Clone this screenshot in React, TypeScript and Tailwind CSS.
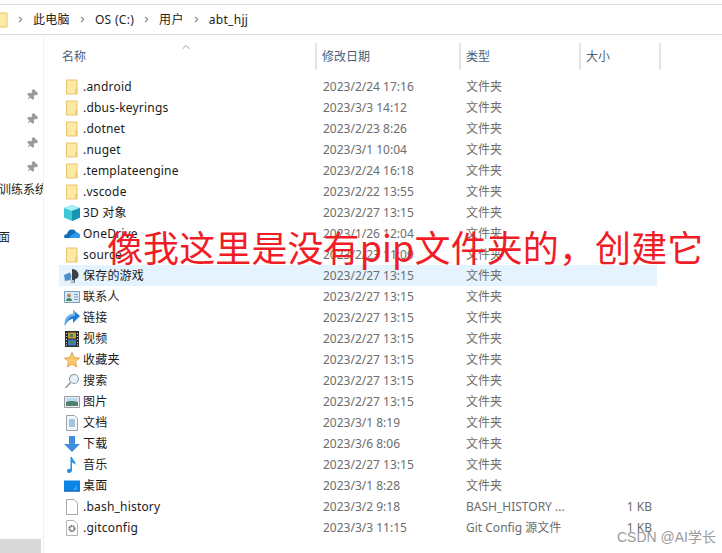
import { Pin, ChevronRight, ChevronUp } from "lucide-react";

const FONT = "font-['Noto_Sans','Noto_Sans_CJK_SC',sans-serif]";

type IconKind =
  | "folder" | "cube" | "cloud" | "games" | "contacts" | "link" | "video" | "star"
  | "search" | "picture" | "doc" | "download" | "music" | "desktop" | "file" | "config";

const ROWS: { name: string; date: string; type: string; size?: string; icon: IconKind }[] = [
  { name: ".android", date: "2023/2/24 17:16", type: "文件夹", icon: "folder" },
  { name: ".dbus-keyrings", date: "2023/3/3 14:12", type: "文件夹", icon: "folder" },
  { name: ".dotnet", date: "2023/2/23 8:26", type: "文件夹", icon: "folder" },
  { name: ".nuget", date: "2023/3/1 10:04", type: "文件夹", icon: "folder" },
  { name: ".templateengine", date: "2023/2/24 16:18", type: "文件夹", icon: "folder" },
  { name: ".vscode", date: "2023/2/22 13:55", type: "文件夹", icon: "folder" },
  { name: "3D 对象", date: "2023/2/27 13:15", type: "文件夹", icon: "cube" },
  { name: "OneDrive", date: "2023/1/26 12:04", type: "文件夹", icon: "cloud" },
  { name: "source", date: "2023/2/23 11:09", type: "文件夹", icon: "folder" },
  { name: "保存的游戏", date: "2023/2/27 13:15", type: "文件夹", icon: "games" },
  { name: "联系人", date: "2023/2/27 13:15", type: "文件夹", icon: "contacts" },
  { name: "链接", date: "2023/2/27 13:15", type: "文件夹", icon: "link" },
  { name: "视频", date: "2023/2/27 13:15", type: "文件夹", icon: "video" },
  { name: "收藏夹", date: "2023/2/27 13:15", type: "文件夹", icon: "star" },
  { name: "搜索", date: "2023/2/27 13:15", type: "文件夹", icon: "search" },
  { name: "图片", date: "2023/2/27 13:15", type: "文件夹", icon: "picture" },
  { name: "文档", date: "2023/3/1 8:19", type: "文件夹", icon: "doc" },
  { name: "下载", date: "2023/3/6 8:06", type: "文件夹", icon: "download" },
  { name: "音乐", date: "2023/2/27 13:15", type: "文件夹", icon: "music" },
  { name: "桌面", date: "2023/3/1 8:28", type: "文件夹", icon: "desktop" },
  { name: ".bash_history", date: "2023/3/2 9:18", type: "BASH_HISTORY ...", size: "1 KB", icon: "file" },
  { name: ".gitconfig", date: "2023/3/3 11:15", type: "Git Config 源文件", size: "1 KB", icon: "config" },
];

function FileIcon({ kind }: { kind: IconKind }) {
  const svg = "h-4 w-4 shrink-0";
  switch (kind) {
    case "folder":
      return (
        <svg viewBox="0 0 16 16" className={svg}>
          <path d="M2.500 1h10.500v14H2.500z" fill="#ffe9a6" stroke="#e8c568" />
          <path d="M11 9.500h2.500V15H11z" fill="#f3cf72" />
        </svg>
      );
    case "cube":
      return (
        <svg viewBox="0 0 16 16" className={svg}>
          <path d="M0 3l8-3 8 3v9.500L8 16l-8-3.500z" fill="#3fc6d8" />
          <path d="M0 3l8 3 8-3-8-3z" fill="#a9ecf2" />
          <path d="M8 6v10l8-3.500V3z" fill="#1793b4" />
        </svg>
      );
    case "cloud":
      return (
        <svg viewBox="0 0 16 16" className={svg}>
          <path d="M0 11c0-2 1.500-3 3-3 .5-3 3-5 5.500-4.500C10.500 3.500 12 5 12 6.500c2.500 0 4 2 4 3.500s-1 2-2 2H2c-1 0-2-.5-2-1z" fill="#0f6cbd" />
          <path d="M6 12c0-2 1.500-3.500 3-4l3-1.500c2.500 0 4 2 4 3.500s-1 2-2 2z" fill="#2b9be8" />
        </svg>
      );
    case "games":
      return (
        <svg viewBox="0 0 16 16" className={svg}>
          <path d="M8 1c4 0 7 3 6.500 7-.3 2-2 3-3.500 3l-.5 4H7.500L8 10z" fill="#3c3f44" />
          <path d="M0 7l6-2.500L7.500 8 6.500 12 1 13z" fill="#4d90cf" />
          <path d="M6.500 12h3.500l-.5 3.500H6.500z" fill="#c4c8cc" />
        </svg>
      );
    case "contacts":
      return (
        <svg viewBox="0 0 16 16" className={svg}>
          <path d="M.5 2.500h15v11H.5z" fill="#d8e9f7" stroke="#7d9db8" />
          <circle cx="5" cy="6.500" r="2" fill="#b98a62" />
          <path d="M2 12c0-2 1.500-3 3-3s3 1 3 3z" fill="#3f8a58" />
          <path d="M10 5.500h4M10 8h4M10 10.500h4" stroke="#7d9db8" />
        </svg>
      );
    case "link":
      return (
        <svg viewBox="0 0 16 16" className={svg}>
          <path d="M1 16c-1-6 1-11 8-12V0l7 6-7 7V9c-3 0-6 2-8 7z" fill="#1f7fd6" />
          <path d="M1 16c-1-6 1-11 8-12V0l2 2v4C6 6 3 9 1 16z" fill="#6fb6ee" />
        </svg>
      );
    case "video":
      return (
        <svg viewBox="0 0 16 16" className={svg}>
          <path d="M1 0h14v16H1z" fill="#2c2c2c" />
          <path d="M4 1.500h8v6H4z" fill="#c69a3a" />
          <path d="M4 8.500h8v6H4z" fill="#3f78c4" />
          <path d="M6 3h3v3H6zM6 10h3v3H6z" fill="#3f8a58" />
          <path d="M2 2h1v1H2zM2 5h1v1H2zM2 8h1v1H2zM2 11h1v1H2zM2 13.500h1v1H2zM13 2h1v1h-1zM13 5h1v1h-1zM13 8h1v1h-1zM13 11h1v1h-1zM13 13.500h1v1h-1z" fill="#ddd" />
        </svg>
      );
    case "star":
      return (
        <svg viewBox="0 0 16 16" className={svg}>
          <path d="M8 .5l2.300 5 5.200.6-3.900 3.500 1.100 5.400L8 12.300 3.300 15l1.100-5.400L.5 6.100l5.200-.6z" fill="#fbc56a" stroke="#d9913a" strokeWidth=".7" />
        </svg>
      );
    case "search":
      return (
        <svg viewBox="0 0 16 16" className={svg}>
          <circle cx="10" cy="6" r="4.500" fill="#e6f1f8" stroke="#8aa0ae" strokeWidth="1.200" />
          <path d="M6.500 9.500L1.500 15" stroke="#9a9a9a" strokeWidth="1.600" />
        </svg>
      );
    case "picture":
      return (
        <svg viewBox="0 0 16 16" className={svg}>
          <path d="M.5 2.500h15v11H.5z" fill="#f2f2f2" stroke="#9a9a9a" />
          <path d="M2 4h12v4H2z" fill="#b9dcf0" />
          <path d="M2 8c3-1.500 8-1.500 12 0v4H2z" fill="#4d8070" />
        </svg>
      );
    case "doc":
      return (
        <svg viewBox="0 0 16 16" className={svg}>
          <path d="M2.500.5h8l3 3v12h-11z" fill="#f4f6f8" stroke="#9aa0a6" />
          <path d="M5 5h6M5 7h6M5 9h6M5 11h6" stroke="#4f93c9" />
        </svg>
      );
    case "download":
      return (
        <svg viewBox="0 0 16 16" className={svg}>
          <path d="M5 0h6v8h5l-8 8-8-8h5z" fill="#3f8fdc" />
        </svg>
      );
    case "music":
      return (
        <svg viewBox="0 0 16 16" className={svg}>
          <path d="M6.500 0H8c.5 3 4 4 3.500 8C10.500 6.500 9.500 6 8 5.500V13c0 1.700-1.300 3-3 3s-2-1-2-2c0-1.500 1.800-2.500 3.500-2z" fill="#2a8fe0" />
        </svg>
      );
    case "desktop":
      return (
        <svg viewBox="0 0 16 16" className={svg}>
          <path d="M0 2.500h16v11H0z" fill="#0b84e3" />
          <path d="M0 12.500h16v1H0z" fill="#0a5fa8" />
          <path d="M9 12l4-5v5z" fill="#39a4f2" />
        </svg>
      );
    case "file":
      return (
        <svg viewBox="0 0 16 16" className={svg}>
          <path d="M2.500.5h7.500l3.500 3.500v11.500h-11z" fill="#fff" stroke="#a6a6a6" />
        </svg>
      );
    case "config":
      return (
        <svg viewBox="0 0 16 16" className={svg}>
          <path d="M2.500.5h7.500l3.500 3.500v11.500h-11z" fill="#fff" stroke="#b5b5b5" />
          <circle cx="8" cy="8.500" r="2.600" fill="none" stroke="#6c6f73" strokeWidth="2" strokeDasharray="1.500 .6" />
        </svg>
      );
  }
}

function Crumb({ label }: { label: string }) {
  return (
    <>
      <ChevronRight size={9} strokeWidth={3} className="text-[#8a8a8a]" />
      <span className="tracking-[0.3px]">{label}</span>
    </>
  );
}

function ColumnHead({ label, width }: { label: string; width: string }) {
  return (
    <div className={`flex h-[27px] items-center border-r-2 border-[#e5e5e5] pl-[5px] pt-px ${width}`}>
      <span>{label}</span>
    </div>
  );
}

export default function App() {
  return (
    <div className={`relative h-[553px] w-[722px] overflow-hidden bg-white text-[12px] ${FONT}`}>
      <div className="h-[5px] border-b border-[#dddddd]" />
      <div className="flex h-[30px] items-center gap-[8px] border-b border-[#dddddd] text-[#222]">
        <svg viewBox="0 0 9 16" className="-ml-px h-[16px] w-[9px]">
          <path d="M0 1h8v14H0z" fill="#ffe9a6" stroke="#e8c568" />
        </svg>
        <Crumb label="此电脑" />
        <Crumb label="OS (C:)" />
        <Crumb label="用户" />
        <Crumb label="abt_hjj" />
      </div>

      <div className="flex h-[518px]">
        <aside className="relative flex w-[44px] shrink-0 flex-col overflow-hidden border-r border-[#f0f0f0]">
          <div className="mt-[54px] flex flex-col items-end gap-[12px] pr-[5px] text-[#9a9a9a]">
            {[0, 1, 2, 3].map(i => (
              <Pin key={i} size={12} fill="currentColor" className="rotate-45" />
            ))}
          </div>
          <div className="mt-[8px] -ml-[1px] whitespace-nowrap text-[#222]">训练系统</div>
          <div className="mt-[30px] -ml-[2px] text-[#222]">面</div>
          <div className="absolute bottom-0 left-0 h-[14px] w-[41px] bg-[#d9d9d9]" />
        </aside>

        <main className="flex min-w-0 flex-1 flex-col">
          <div className="relative mt-[8px] flex text-[#4c607a]">
            <ChevronUp size={12} strokeWidth={1.500} className="absolute left-[136px] -top-[2px] text-[#777]" />
            <div className="w-[13px]" />
            <ColumnHead label="名称" width="w-[260px]" />
            <ColumnHead label="修改日期" width="w-[144px]" />
            <ColumnHead label="类型" width="w-[120px]" />
            <ColumnHead label="大小" width="w-[80px]" />
          </div>

          <div className="mt-[6px] flex flex-col">
            {ROWS.map(row => (
              <div
                key={row.name}
                className={`ml-[15px] flex h-[21px] w-[598px] items-center ${row.icon === "games" ? "bg-[#e5f3ff]" : ""}`}
              >
                <div className="flex w-[258px] shrink-0 items-center gap-[3px] pl-[5px] text-[#1a1a1a]">
                  <FileIcon kind={row.icon} />
                  <span className="tracking-[0.2px]">{row.name}</span>
                </div>
                <div className="w-[144px] shrink-0 pl-[6px] text-[#6d6d6d]">{row.date}</div>
                <div className="w-[120px] shrink-0 pl-[5px] text-[#6d6d6d]">{row.type}</div>
                <div className="w-[71px] shrink-0 text-right text-[#6d6d6d]">{row.size}</div>
              </div>
            ))}
          </div>
        </main>
      </div>

      <div className="absolute left-[107px] top-[224px] whitespace-nowrap font-['Noto_Sans_CJK_SC','Noto_Sans',sans-serif] text-[36px] leading-[44px] tracking-[0.1px] text-[#f01c26]">
        像我这里是没有pip文件夹的，创建它
      </div>
      <div className="absolute right-[6px] top-[529px] font-['Liberation_Sans','Noto_Sans_CJK_SC',sans-serif] text-[14px] leading-[16px] text-[#9b9b9b]">CSDN @AI学长</div>
    </div>
  );
}
